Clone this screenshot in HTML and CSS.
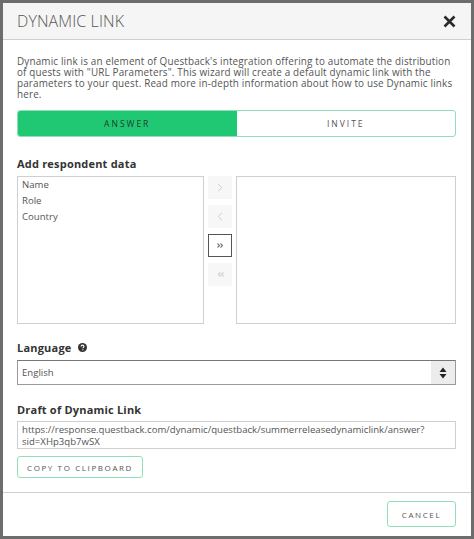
FILE: index.html
```html
<!DOCTYPE html>
<html lang="en">
<head>
<meta charset="utf-8">
<title>Dynamic link</title>
<link rel="stylesheet" href="styles.css">
</head>
<body>
<div class="modal">
  <div class="modal-header">
    <h1 class="modal-title">DYNAMIC LINK</h1>
    <button class="close" aria-label="Close">
      <svg width="13" height="13" viewBox="0 0 13 13"><path d="M1.5 1.5 L11.5 11.5 M11.5 1.5 L1.5 11.5" stroke="#2b2b2b" stroke-width="2.6" stroke-linecap="butt"/></svg>
    </button>
  </div>
  <div class="modal-body">
    <p class="intro">Dynamic link is an element of Questback's integration offering to automate the distribution of quests with "URL Parameters". This wizard will create a default dynamic link with the parameters to your quest. Read more in-depth information about how to use Dynamic links here.</p>
    <div class="tabs">
      <div class="tab active">ANSWER</div>
      <div class="tab">INVITE</div>
    </div>
    <div class="label first">Add respondent data</div>
    <div class="picker">
      <ul class="listbox">
        <li>Name</li>
        <li>Role</li>
        <li>Country</li>
      </ul>
      <div class="movers">
        <button class="mover" aria-label="Add"><svg width="6" height="9" viewBox="0 0 6 9"><path d="M1 0.8 L4.8 4.5 L1 8.2" fill="none" stroke="currentColor" stroke-width="1"/></svg></button>
        <button class="mover" aria-label="Remove"><svg width="6" height="9" viewBox="0 0 6 9"><path d="M5 0.8 L1.2 4.5 L5 8.2" fill="none" stroke="currentColor" stroke-width="1"/></svg></button>
        <button class="mover on" aria-label="Add all"><svg width="7" height="5" viewBox="0 0 7 5"><path d="M0.5 0.5 L2.5 2.5 L0.5 4.5 M3.5 0.5 L5.5 2.5 L3.5 4.5" fill="none" stroke="currentColor" stroke-width="1.1"/></svg></button>
        <button class="mover" aria-label="Remove all"><svg width="7" height="5" viewBox="0 0 7 5"><path d="M3.5 0.5 L1.5 2.5 L3.5 4.5 M6.5 0.5 L4.5 2.5 L6.5 4.5" fill="none" stroke="currentColor" stroke-width="1.1"/></svg></button>
      </div>
      <ul class="listbox"></ul>
    </div>
    <div class="label lang">Language
      <svg class="help" width="9" height="9" viewBox="0 0 10 10"><circle cx="5" cy="5" r="5" fill="#333"/><path d="M3.4 3.9 C3.4 2.9 4.1 2.4 5 2.4 C5.9 2.4 6.6 2.9 6.6 3.8 C6.6 4.8 5.4 4.9 5.4 5.9" stroke="#fff" stroke-width="1.2" fill="none"/><circle cx="5.4" cy="7.6" r="0.75" fill="#fff"/></svg>
    </div>
    <div class="select">
      <span class="select-value">English</span>
      <span class="select-arrows">
        <svg width="8" height="12" viewBox="0 0 8 12"><path d="M4 0.5 L7.5 5 L0.5 5 Z M0.5 7 L7.5 7 L4 11.5 Z" fill="#222"/></svg>
      </span>
    </div>
    <div class="label draft">Draft of Dynamic Link</div>
    <div class="link-box">https://response.questback.com/dynamic/questback/summerreleasedynamiclink/answer?sid=XHp3qb7wSX</div>
    <button class="btn copy">COPY TO CLIPBOARD</button>
  </div>
  <div class="modal-footer">
    <button class="btn cancel">CANCEL</button>
  </div>
</div>
</body>
</html>
```
FILE: styles.css
```css
html, body {
  margin: 0;
  padding: 0;
}
body {
  background: #6d6d6d;
  padding: 3px;
  font-family: "Open Sans", "DejaVu Sans", sans-serif;
  color: #555;
}
.modal {
  background: #fff;
  height: 533px;
  display: flex;
  flex-direction: column;
}
.modal-header {
  height: 38px;
  background: #f5f5f5;
  border-bottom: 1px solid #cfcfcf;
  display: flex;
  align-items: center;
  justify-content: space-between;
  padding: 0 15px 0 14px;
}
.modal-title {
  margin: 0;
  font-size: 16px;
  font-weight: 300;
  color: #555;
  letter-spacing: 0.1px;
}
.close {
  border: 0;
  background: none;
  padding: 0;
  width: 13px;
  height: 13px;
  display: flex;
}
.modal-body {
  flex: 1;
  padding: 16px 15px 14px 14px;
  border-bottom: 1px solid #cfcfcf;
}
.intro {
  margin: 0;
  font-size: 9.9px;
  letter-spacing: 0.17px;
  line-height: 11px;
  color: #555;
}
.tabs {
  margin-top: 10px;
  display: flex;
  height: 25px;
  border: 1px solid #8fe0b8;
  border-radius: 3px;
  overflow: hidden;
}
.tab {
  flex: 1;
  display: flex;
  align-items: center;
  justify-content: center;
  font-size: 8.5px;
  letter-spacing: 2px;
  color: #555;
}
.tab.active {
  background: #20c873;
  color: #1f3d2d;
}
.label {
  font-size: 11px;
  font-weight: 700;
  color: #333;
  line-height: 15px;
  margin-top: 17px;
  letter-spacing: 0.2px;
}
.label.first {
  margin-top: 19px;
}
.picker {
  margin-top: 5px;
  display: grid;
  grid-template-columns: 187px 24px 1fr;
  gap: 4px;
  height: 148px;
}
.listbox {
  margin: 0;
  padding: 0 4px;
  list-style: none;
  border: 1px solid #cfcfcf;
  font-size: 9.6px;
  line-height: 16px;
  color: #555;
}
.movers {
  display: flex;
  flex-direction: column;
  gap: 6px;
}
.mover {
  height: 23px;
  border: 1px solid transparent;
  background: #f7f7f7;
  color: #cdcdcd;
  padding: 0;
  display: flex;
  align-items: center;
  justify-content: center;
}
.mover.on {
  background: #fff;
  border-color: #555;
  color: #777;
}
.lang {
  margin-top: 16px;
  display: flex;
  align-items: center;
  gap: 6px;
}
.select {
  margin-top: 5px;
  height: 23px;
  border: 1px solid #9a9a9a;
  border-top-color: #777;
  display: flex;
  align-items: center;
}
.select-value {
  flex: 1;
  padding-left: 4px;
  font-size: 9.6px;
  color: #555;
}
.select-arrows {
  width: 24px;
  height: 100%;
  background: #ececec;
  display: flex;
  align-items: center;
  justify-content: center;
}
.draft {
  margin-top: 17px;
}
.link-box {
  margin-top: 4px;
  border: 1px solid #cfcfcf;
  padding: 2px 4px;
  font-size: 9.6px;
  line-height: 12px;
  color: #555;
  height: 22px;
}
.btn {
  font-family: "Open Sans", "DejaVu Sans", sans-serif;
  background: #fff;
  border: 1px solid #8fe0b8;
  border-radius: 3px;
  color: #555;
  font-size: 8px;
  letter-spacing: 1.6px;
  padding: 0;
}
.copy {
  margin-top: 7px;
  width: 126px;
  height: 22px;
  display: block;
}
.modal-footer {
  display: flex;
  justify-content: flex-end;
  padding: 8px 15px 9px 0;
}
.cancel {
  width: 69px;
  height: 26px;
}
```
